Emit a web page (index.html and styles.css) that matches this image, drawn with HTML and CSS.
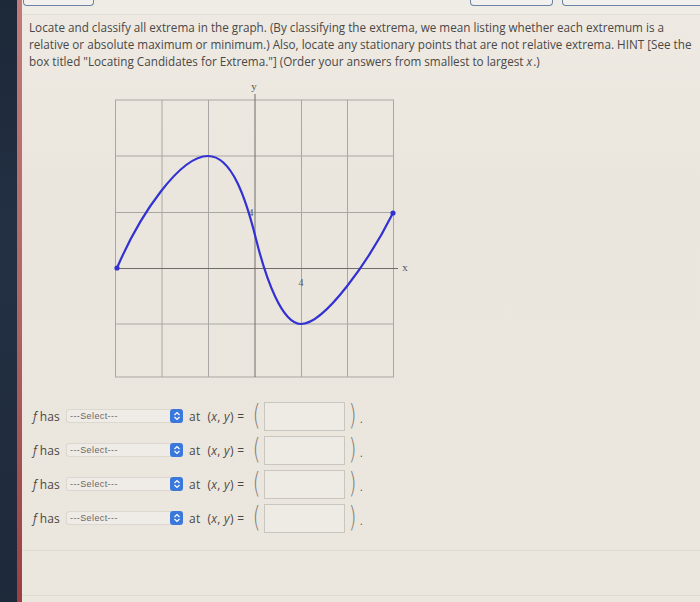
FILE: index.html
```html
<!DOCTYPE html>
<html>
<head>
<meta charset="utf-8">
<link rel="stylesheet" href="styles.css">
</head>
<body>
<div class="screen">
  <div class="bezel"></div>
  <div class="edge"></div>
  <div class="main">
    <div class="topbar">
      <div class="tab tab-left"></div>
      <div class="spacer"></div>
      <div class="tab tab-mid"></div>
      <div class="tab tab-right"></div>
    </div>
    <p class="question">Locate and classify all extrema in the graph. (By classifying the extrema, we mean listing whether each extremum is a relative or absolute maximum or minimum.) Also, locate any stationary points that are not relative extrema. HINT [See the box titled "Locating Candidates for Extrema."] (Order your answers from smallest to largest <span class="var">x</span>.)</p>
    <svg class="graph" width="320" height="310" viewBox="100 78 320 310" xmlns="http://www.w3.org/2000/svg">
      <g stroke="#a9a7a3" stroke-width="1" fill="none">
        <line x1="115.5" y1="101" x2="115.5" y2="378"/>
        <line x1="162" y1="101" x2="162" y2="378"/>
        <line x1="208.5" y1="101" x2="208.5" y2="378"/>
        <line x1="301.5" y1="101" x2="301.5" y2="378"/>
        <line x1="347.5" y1="101" x2="347.5" y2="378"/>
        <line x1="393.5" y1="101" x2="393.5" y2="378"/>
        <line x1="115" y1="101" x2="394" y2="101"/>
        <line x1="115" y1="157" x2="394" y2="157"/>
        <line x1="115" y1="213.5" x2="394" y2="213.5"/>
        <line x1="115" y1="325" x2="394" y2="325"/>
        <line x1="115" y1="378" x2="394" y2="378"/>
      </g>
      <g stroke="#6f6d6a" stroke-width="1">
        <line x1="255" y1="95" x2="255" y2="378"/>
        <line x1="115" y1="269.5" x2="398" y2="269.5"/>
      </g>
      <text x="254" y="91" class="axis-label" text-anchor="middle">y</text>
      <text x="405" y="272" class="axis-label" text-anchor="middle">x</text>
      <text x="251" y="217" class="tick-label" text-anchor="middle">4</text>
      <text x="301" y="287" class="tick-label" text-anchor="middle">4</text>
      <path d="M117,269 C140,215 180,157 208,157 C232,157 246,200 256,240 C266,280 282,325 301,325 C325,325 370,260 393,214" stroke="#3232d2" stroke-width="2.2" fill="none" stroke-linecap="round"/>
      <circle cx="117" cy="269" r="2.6" fill="#3232d2"/>
      <circle cx="393" cy="214" r="2.6" fill="#3232d2"/>
    </svg>
    <div class="answers">
      <div class="row">
        <span class="fhas"><i>f</i> has</span>
        <span class="select"><span class="select-text">---Select---</span><span class="select-btn"><svg width="8" height="10" viewBox="0 0 8 10"><path d="M1.5 4 L4 1.5 L6.5 4 M1.5 6 L4 8.5 L6.5 6" stroke="#fff" stroke-width="1.2" fill="none"/></svg></span></span>
        <span class="at">at&nbsp; (<i>x</i>, <i>y</i>) =</span>
        <span class="paren">(</span><span class="box"></span><span class="paren">)</span><span class="dot">.</span>
      </div>
      <div class="row">
        <span class="fhas"><i>f</i> has</span>
        <span class="select"><span class="select-text">---Select---</span><span class="select-btn"><svg width="8" height="10" viewBox="0 0 8 10"><path d="M1.5 4 L4 1.5 L6.5 4 M1.5 6 L4 8.5 L6.5 6" stroke="#fff" stroke-width="1.2" fill="none"/></svg></span></span>
        <span class="at">at&nbsp; (<i>x</i>, <i>y</i>) =</span>
        <span class="paren">(</span><span class="box"></span><span class="paren">)</span><span class="dot">.</span>
      </div>
      <div class="row">
        <span class="fhas"><i>f</i> has</span>
        <span class="select"><span class="select-text">---Select---</span><span class="select-btn"><svg width="8" height="10" viewBox="0 0 8 10"><path d="M1.5 4 L4 1.5 L6.5 4 M1.5 6 L4 8.5 L6.5 6" stroke="#fff" stroke-width="1.2" fill="none"/></svg></span></span>
        <span class="at">at&nbsp; (<i>x</i>, <i>y</i>) =</span>
        <span class="paren">(</span><span class="box"></span><span class="paren">)</span><span class="dot">.</span>
      </div>
      <div class="row">
        <span class="fhas"><i>f</i> has</span>
        <span class="select"><span class="select-text">---Select---</span><span class="select-btn"><svg width="8" height="10" viewBox="0 0 8 10"><path d="M1.5 4 L4 1.5 L6.5 4 M1.5 6 L4 8.5 L6.5 6" stroke="#fff" stroke-width="1.2" fill="none"/></svg></span></span>
        <span class="at">at&nbsp; (<i>x</i>, <i>y</i>) =</span>
        <span class="paren">(</span><span class="box"></span><span class="paren">)</span><span class="dot">.</span>
      </div>
    </div>
    <div class="footer"></div>
  </div>
</div>
</body>
</html>
```
FILE: styles.css
```css
html, body {
  margin: 0;
  padding: 0;
  height: 100%;
  overflow: hidden;
}
body {
  background: #ebe6dd;
  font-family: "Open Sans", "DejaVu Sans", sans-serif;
  color: #4a4846;
}
.screen {
  display: flex;
  height: 602px;
}
.bezel {
  width: 17px;
  flex: none;
  background: linear-gradient(180deg, #1d2838 0%, #233044 40%, #1e2a3a 100%);
}
.edge {
  width: 5px;
  flex: none;
  background: linear-gradient(180deg, #c27a7b 0%, #b06466 50%, #9c3f44 100%);
}
.main {
  flex: 1;
  display: flex;
  flex-direction: column;
  background: linear-gradient(180deg, #eeeae3 0%, #ebe6dd 30%, #ece7de 100%);
}
.topbar {
  height: 14px;
  display: flex;
  align-items: flex-start;
  border-bottom: 1px solid #e4dfd6;
  background: #efebe5;
}
.tab {
  height: 5px;
  border: 1.5px solid #6b84a6;
  border-top: none;
  border-radius: 0 0 4px 4px;
  background: #f3f1ee;
}
.tab-left { width: 69px; margin-left: 1px; }
.spacer { flex: 1; }
.tab-mid { width: 81px; margin-right: 9px; }
.tab-right { width: 140px; margin-right: -4px; }
.question {
  margin: 4px 0 0 7px;
  font-size: 11.7px;
  line-height: 17px;
  color: #4a4846;
}
.var {
  font-style: italic;
  margin-right: 1px;
}
.graph {
  display: block;
  margin-left: 78px;
  margin-top: 7px;
}
.axis-label {
  font-family: "Liberation Serif", serif;
  font-size: 11px;
  fill: #555;
}
.tick-label {
  font-family: "Liberation Serif", serif;
  font-size: 10px;
  fill: #555;
}
.answers {
  display: flex;
  flex-direction: column;
  margin-top: 12px;
  padding-left: 11px;
}
.row {
  height: 34px;
  display: flex;
  align-items: center;
  font-size: 12px;
  color: #4a4846;
}
.fhas {
  width: 33px;
  flex: none;
}
.select {
  width: 117px;
  height: 14px;
  display: flex;
  align-items: center;
  justify-content: space-between;
  background: #efebe6;
  border: 1px solid #dcd7cf;
  border-right: none;
  border-radius: 3px;
  box-sizing: border-box;
}
.select-text {
  font-family: "Liberation Sans", sans-serif;
  font-size: 9px;
  letter-spacing: 0.4px;
  color: #6a6865;
  padding-left: 3px;
}
.select-btn {
  width: 13px;
  height: 14px;
  background: #3b78dc;
  border-radius: 3px;
  display: flex;
  align-items: center;
  justify-content: center;
}
.at {
  margin-left: 6px;
  width: 62px;
  flex: none;
  letter-spacing: 0.3px;
}
.paren {
  font-family: "DejaVu Sans", sans-serif;
  font-weight: 200;
  font-size: 28px;
  color: #7a7875;
  transform: scaleX(0.7);
  line-height: 30px;
}
.box {
  width: 79px;
  height: 27px;
  border: 1px solid #c9c5bf;
  background: #eeeae4;
  margin: 0 2px;
}
.dot {
  font-size: 10px;
  margin-left: 2px;
  margin-top: 6px;
}
.footer {
  margin-top: 15px;
  height: 44px;
  border-top: 1px solid #e0dbd2;
  border-bottom: 1px solid #e0dbd2;
}
```
